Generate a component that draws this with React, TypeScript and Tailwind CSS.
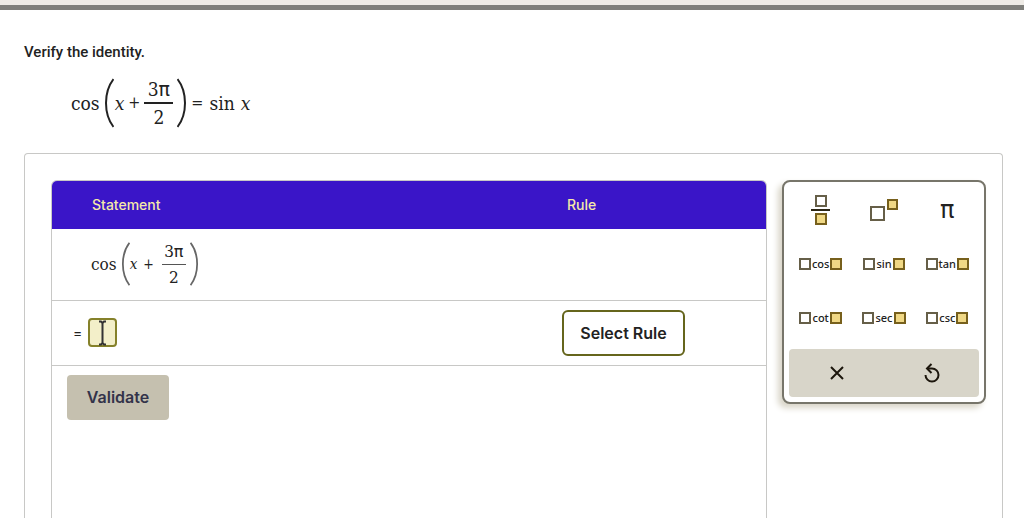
import type { ReactNode } from "react";

type ParenProps = { side: "left" | "right"; className: string };

function Paren({ side, className }: ParenProps) {
  return (
    <svg viewBox="0 0 10 50" fill="none" stroke="currentColor" className={className} aria-hidden="true">
      {side === "left" ? (
        <path d="M9.5 1 C-0.5 14 -0.5 36 9.5 49" />
      ) : (
        <path d="M0.5 1 C10.5 14 10.5 36 0.5 49" />
      )}
    </svg>
  );
}

function Box() {
  return <span className="size-3 shrink-0 border-2 border-[#665f48] bg-white" />;
}

function FilledBox() {
  return <span className="size-3 shrink-0 border-2 border-[#77601c] bg-[#f0d885]" />;
}

function Key({ label, children }: { label: string; children: ReactNode }) {
  return (
    <button type="button" aria-label={label} className="flex items-center justify-center">
      {children}
    </button>
  );
}

function TrigKey({ name }: { name: string }) {
  return (
    <Key label={name}>
      <span className="flex items-center gap-px text-[11px] leading-3 font-medium font-['Noto_Sans',sans-serif]">
        <Box />
        <span className="-mt-px">{name}</span>
        <FilledBox />
      </span>
    </Key>
  );
}

function Keypad() {
  return (
    <aside className="w-[204px] shrink-0 rounded-lg border-2 border-[#77756a] bg-white px-[5px] pt-px pb-[5px] shadow-[-4px_4px_6px_#d9d5c8]">
      <div className="grid auto-rows-[54px] grid-cols-3">
        <Key label="Fraction">
          <span className="flex flex-col items-center gap-[2px]">
            <Box />
            <span className="h-[2px] w-[19px] bg-[#2b2614]" />
            <FilledBox />
          </span>
        </Key>
        <Key label="Exponent">
          <svg width="28" height="23" viewBox="0 0 28 23" strokeWidth="2">
            <rect x="1" y="8" width="13" height="13" fill="#fff" stroke="#665f48" />
            <rect x="18" y="1" width="9" height="9" fill="#f0d885" stroke="#77601c" />
          </svg>
        </Key>
        <Key label="Pi">
          <span className="text-2xl leading-6 font-['DejaVu_Sans',sans-serif]">π</span>
        </Key>
        <TrigKey name="cos" />
        <TrigKey name="sin" />
        <TrigKey name="tan" />
        <TrigKey name="cot" />
        <TrigKey name="sec" />
        <TrigKey name="csc" />
      </div>
      <div className="mt-1 grid h-12 grid-cols-2 rounded bg-[#d8d5c9]">
        <Key label="Clear">
          <svg width="14" height="14" viewBox="0 0 14 14" fill="none" stroke="#1c160c" strokeWidth="2">
            <path d="M1 1 L13 13 M13 1 L1 13" />
          </svg>
        </Key>
        <Key label="Undo">
          <svg width="16" height="20" viewBox="0 0 16 20" fill="none" stroke="#1c160c" strokeWidth="2">
            <path d="M1.5 12 A6.5 6.5 0 1 0 8 5.5 H3.5" />
            <path d="M7.5 1 L3 5.5 L7.5 10" />
          </svg>
        </Key>
      </div>
    </aside>
  );
}

export default function App() {
  return (
    <div className="flex min-h-screen flex-col bg-white text-[#222] font-['Inter',sans-serif]">
      <header className="h-[10px] border-b-[5px] border-[#7f7f7b] bg-[#eeebe6]" />

      <main className="flex flex-1 flex-col pr-[21px] pl-6">
        <h1 className="mt-8 text-[15px] leading-5 font-medium font-['Roboto',sans-serif]">
          Verify the identity.
        </h1>

        <div className="mt-[15px] flex h-[52px] items-center pl-[47px] text-[19px] leading-6 font-['DejaVu_Serif_Condensed','DejaVu_Serif',serif]">
          <span>cos</span>
          <Paren side="left" className="ml-1 h-[50px] w-[10px] stroke-2" />
          <i className="ml-px">x</i>
          <span className="ml-1 text-base">+</span>
          <span className="ml-1 flex flex-col items-center">
            <span>
              3<span className="font-['DejaVu_Sans',sans-serif]">π</span>
            </span>
            <span className="my-px h-[2px] w-[29px] bg-[#222]" />
            <span>2</span>
          </span>
          <Paren side="right" className="ml-1 h-[50px] w-[10px] stroke-2" />
          <span className="ml-1 text-base">=</span>
          <span className="ml-[6px]">sin</span>
          <i className="ml-[6px]">x</i>
        </div>

        <section className="mt-6 flex flex-1 items-start gap-[15px] rounded-t border border-b-0 border-[#c8c8c6] pt-[26px] pr-4 pl-[26px]">
          <div className="flex-1 self-stretch overflow-hidden rounded-t-md border border-b-0 border-[#c8c8c6]">
            <table className="w-full table-fixed border-collapse text-left">
              <thead>
                <tr className="h-12 bg-[#3a15c8] text-sm font-medium text-[#f5e9a8]">
                  <th scope="col" className="pb-px pl-10 font-medium">
                    Statement
                  </th>
                  <th scope="col" className="w-[214px] pb-px pl-[15px] font-medium">
                    Rule
                  </th>
                </tr>
              </thead>
              <tbody>
                <tr className="h-[71px] border-b border-[#c8c8c6]">
                  <td className="pb-px pl-[39px]">
                    <div className="flex items-center text-[17px] leading-5 font-['DejaVu_Serif_Condensed','DejaVu_Serif',serif]">
                      <span>cos</span>
                      <Paren side="left" className="ml-1 h-11 w-[9px] stroke-2 text-[#666]" />
                      <i className="text-[15px]">x</i>
                      <span className="ml-[6px] text-sm">+</span>
                      <span className="ml-2 flex flex-col items-center">
                        <span>
                          3<span className="text-base leading-5 font-['DejaVu_Sans',sans-serif]">π</span>
                        </span>
                        <span className="my-[2px] h-px w-6 bg-[#555]" />
                        <span>2</span>
                      </span>
                      <Paren side="right" className="ml-1 h-11 w-[9px] stroke-2 text-[#666]" />
                    </div>
                  </td>
                  <td />
                </tr>
                <tr className="h-[65px] border-b border-[#c8c8c6]">
                  <td className="pl-[21px]">
                    <div className="flex items-center gap-[6px]">
                      <label htmlFor="step" className="text-sm leading-5">
                        =
                      </label>
                      <span className="relative flex">
                        <input
                          id="step"
                          type="text"
                          className="size-[29px] rounded border-2 border-[#85812a] bg-[#f3efc9] text-center outline-none"
                        />
                        <svg
                          viewBox="0 0 9 26"
                          fill="none"
                          stroke="#333"
                          strokeWidth="2"
                          className="pointer-events-none absolute inset-0 m-auto h-[26px] w-[9px]"
                        >
                          <path d="M1 1.5 H3 L4.5 3 L6 1.5 H8 M4.5 3 V23 M1 24.5 H3 L4.5 23 L6 24.5 H8" />
                        </svg>
                      </span>
                    </div>
                  </td>
                  <td className="pl-[10px]">
                    <button
                      type="button"
                      className="h-[46px] w-[123px] rounded-md border-2 border-[#65651c] bg-white text-base font-semibold"
                    >
                      Select Rule
                    </button>
                  </td>
                </tr>
              </tbody>
            </table>
            <button
              type="button"
              className="mt-[9px] ml-[15px] h-[45px] w-[102px] rounded bg-[#c5c0af] text-base font-semibold text-[#33334a]"
            >
              Validate
            </button>
          </div>

          <Keypad />
        </section>
      </main>
    </div>
  );
}
